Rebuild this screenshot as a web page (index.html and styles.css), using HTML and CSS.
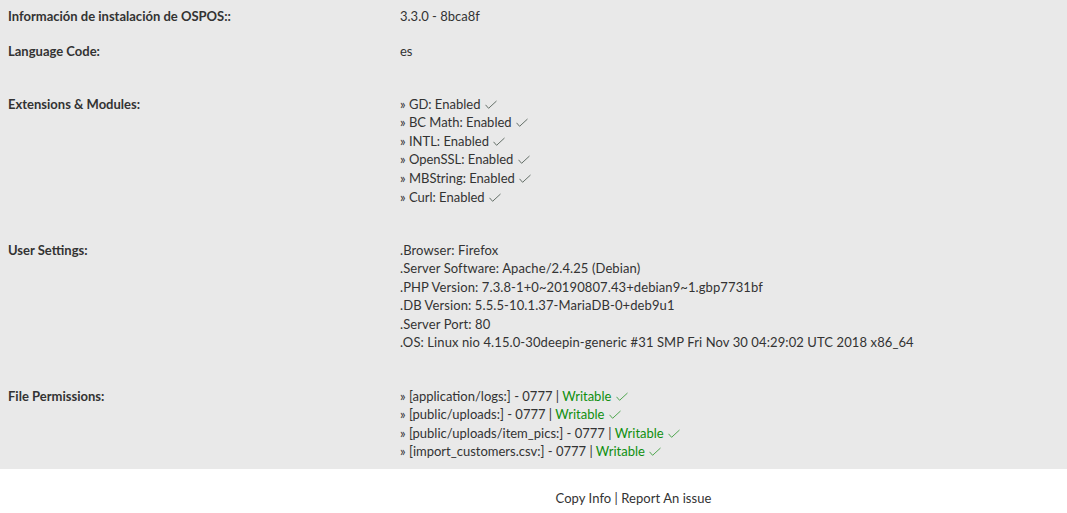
FILE: index.html
```html
<!DOCTYPE html>
<html>
<head>
<meta charset="utf-8">
<link rel="stylesheet" href="styles.css">
</head>
<body>
<div class="info">
  <div class="row">
    <div class="label">Información de instalación de OSPOS::</div>
    <div class="value">3.3.0 - 8bca8f</div>
  </div>
  <div class="row">
    <div class="label">Language Code:</div>
    <div class="value">es<br><br></div>
  </div>
  <div class="row">
    <div class="label">Extensions &amp; Modules:</div>
    <div class="value">
      <div>» GD: Enabled <svg class="chk" viewBox="0 0 12 9"><path d="M0.5 4.8 L3.6 8.3 L11.5 1"/></svg></div>
      <div>» BC Math: Enabled <svg class="chk" viewBox="0 0 12 9"><path d="M0.5 4.8 L3.6 8.3 L11.5 1"/></svg></div>
      <div>» INTL: Enabled <svg class="chk" viewBox="0 0 12 9"><path d="M0.5 4.8 L3.6 8.3 L11.5 1"/></svg></div>
      <div>» OpenSSL: Enabled <svg class="chk" viewBox="0 0 12 9"><path d="M0.5 4.8 L3.6 8.3 L11.5 1"/></svg></div>
      <div>» MBString: Enabled <svg class="chk" viewBox="0 0 12 9"><path d="M0.5 4.8 L3.6 8.3 L11.5 1"/></svg></div>
      <div>» Curl: Enabled <svg class="chk" viewBox="0 0 12 9"><path d="M0.5 4.8 L3.6 8.3 L11.5 1"/></svg></div>
      <br>
    </div>
  </div>
  <div class="row">
    <div class="label">User Settings:</div>
    <div class="value wide">
      <div>.Browser: Firefox</div>
      <div>.Server Software: Apache/2.4.25 (Debian)</div>
      <div>.PHP Version: 7.3.8-1+0~20190807.43+debian9~1.gbp7731bf</div>
      <div>.DB Version: 5.5.5-10.1.37-MariaDB-0+deb9u1</div>
      <div>.Server Port: 80</div>
      <div>.OS: Linux nio 4.15.0-30deepin-generic #31 SMP Fri Nov 30 04:29:02 UTC 2018 x86_64</div>
      <br>
    </div>
  </div>
  <div class="row">
    <div class="label">File Permissions:</div>
    <div class="value">
      <div>» [application/logs:] - 0777 | <span class="ok">Writable <svg class="chk g" viewBox="0 0 12 9"><path d="M0.5 4.8 L3.6 8.3 L11.5 1"/></svg></span></div>
      <div>» [public/uploads:] - 0777 | <span class="ok">Writable <svg class="chk g" viewBox="0 0 12 9"><path d="M0.5 4.8 L3.6 8.3 L11.5 1"/></svg></span></div>
      <div>» [public/uploads/item_pics:] - 0777 | <span class="ok">Writable <svg class="chk g" viewBox="0 0 12 9"><path d="M0.5 4.8 L3.6 8.3 L11.5 1"/></svg></span></div>
      <div>» [import_customers.csv:] - 0777 | <span class="ok">Writable <svg class="chk g" viewBox="0 0 12 9"><path d="M0.5 4.8 L3.6 8.3 L11.5 1"/></svg></span></div>
    </div>
  </div>
</div>
<div class="footer"><a class="link">Copy Info</a> | <a class="link">Report An issue</a></div>
</body>
</html>
```

FILE: styles.css
```css
html, body {
  margin: 0;
  padding: 0;
  background: #ffffff;
}
body {
  font-family: Lato, "Open Sans", sans-serif;
  font-size: 13px;
  line-height: 1.42857;
  color: #333333;
}
.info {
  background: #e9e9e9;
  margin-top: -1px;
}
.row {
  display: grid;
  grid-template-columns: 392px 1fr;
  padding: 8px 8px;
}
.label {
  font-weight: bold;
}
.value.wide {
  letter-spacing: 0.1px;
}
.ok {
  color: #0f8f0f;
}
.chk {
  width: 12px;
  height: 9px;
  margin-left: 1px;
  vertical-align: 0px;
  fill: none;
  stroke: #56625a;
  stroke-width: 0.9;
}
.chk.g {
  stroke: #3f9f3f;
}
.footer {
  padding: 20px 0 0 200px;
  text-align: center;
  letter-spacing: 0.05px;
}
.link {
  color: #333333;
  text-decoration: none;
}
```
